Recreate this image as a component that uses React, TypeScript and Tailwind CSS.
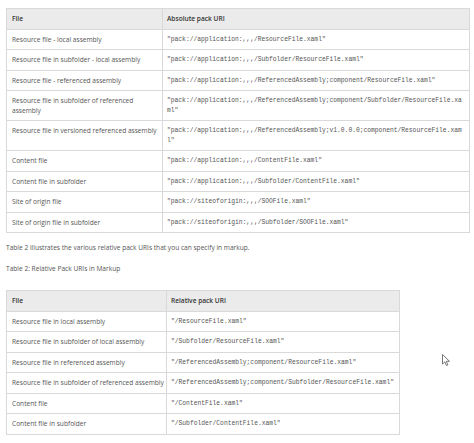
import React from "react";

type Row = { file: string[]; uri: string[] };

const t1: Row[] = [
  { file: ["Resource file - local assembly"], uri: ['"pack://application:,,,/ResourceFile.xaml"'] },
  { file: ["Resource file in subfolder - local assembly"], uri: ['"pack://application:,,,/Subfolder/ResourceFile.xaml"'] },
  { file: ["Resource file - referenced assembly"], uri: ['"pack://application:,,,/ReferencedAssembly;component/ResourceFile.xaml"'] },
  { file: ["Resource file in subfolder of referenced", "assembly"], uri: ['"pack://application:,,,/ReferencedAssembly;component/Subfolder/ResourceFile.xa', 'ml"'] },
  { file: ["Resource file in versioned referenced assembly"], uri: ['"pack://application:,,,/ReferencedAssembly;v1.0.0.0;component/ResourceFile.xam', 'l"'] },
  { file: ["Content file"], uri: ['"pack://application:,,,/ContentFile.xaml"'] },
  { file: ["Content file in subfolder"], uri: ['"pack://application:,,,/Subfolder/ContentFile.xaml"'] },
  { file: ["Site of origin file"], uri: ['"pack://siteoforigin:,,,/SOOFile.xaml"'] },
  { file: ["Site of origin file in subfolder"], uri: ['"pack://siteoforigin:,,,/Subfolder/SOOFile.xaml"'] },
];

const t2: Row[] = [
  { file: ["Resource file in local assembly"], uri: ['"/ResourceFile.xaml"'] },
  { file: ["Resource file in subfolder of local assembly"], uri: ['"/Subfolder/ResourceFile.xaml"'] },
  { file: ["Resource file in referenced assembly"], uri: ['"/ReferencedAssembly;component/ResourceFile.xaml"'] },
  { file: ["Resource file in subfolder of referenced assembly"], uri: ['"/ReferencedAssembly;component/Subfolder/ResourceFile.xaml"'] },
  { file: ["Content file"], uri: ['"/ContentFile.xaml"'] },
  { file: ["Content file in subfolder"], uri: ['"/Subfolder/ContentFile.xaml"'] },
];

const thBase =
  "border border-[#d9d9d9] text-left font-semibold text-[#333] text-[6.6px] leading-[9.5px] py-[5px] font-['Open_Sans','Noto_Sans',sans-serif]";
const tdFile =
  "border border-[#d9d9d9] align-top text-[#555] text-[6.6px] leading-[9.5px] px-[5px] py-[5px] font-['Open_Sans','Noto_Sans',sans-serif]";
const tdUri =
  "border border-[#d9d9d9] align-top text-[#555] text-[6.3px] leading-[9.5px] px-[4px] py-[5px] font-['Liberation_Mono',monospace]";

function Body({ rows }: { rows: Row[] }) {
  return (
    <tbody>
      {rows.map((r, i) => (
        <tr key={i} className="bg-white">
          <td className={tdFile}>
            {r.file.map((l, j) => (
              <div key={j} className="whitespace-nowrap">{l}</div>
            ))}
          </td>
          <td className={tdUri}>
            {r.uri.map((l, j) => (
              <div key={j} className="whitespace-nowrap">{l}</div>
            ))}
          </td>
        </tr>
      ))}
    </tbody>
  );
}

export default function App() {
  return (
    <div className="w-[474px] h-[443px] bg-white relative overflow-hidden">
      <div className="pl-[6px] pt-[8px] flex flex-col items-start">
        <table className="border-collapse table-fixed w-[463px]">
          <thead>
            <tr className="bg-[#ebebeb]">
              <th className={thBase + " w-[156px] px-[5px]"}>File</th>
              <th className={thBase + " w-[307px] px-[4px]"}>Absolute pack URI</th>
            </tr>
          </thead>
          <Body rows={t1} />
        </table>
        <p className="mt-[10px] text-[6.6px] leading-[10px] text-[#555] font-['Open_Sans','Noto_Sans',sans-serif]">
          Table 2 illustrates the various relative pack URIs that you can specify in markup.
        </p>
        <p className="mt-[11px] text-[6.6px] leading-[10px] text-[#555] font-['Open_Sans','Noto_Sans',sans-serif]">
          Table 2: Relative Pack URIs in Markup
        </p>
        <table className="mt-[16px] border-collapse table-fixed w-[393px]">
          <thead>
            <tr className="bg-[#ebebeb]">
              <th className={thBase + " w-[160px] px-[5px]"}>File</th>
              <th className={thBase + " w-[233px] px-[4px]"}>Relative pack URI</th>
            </tr>
          </thead>
          <Body rows={t2} />
        </table>
      </div>
      <svg className="absolute left-[442px] top-[354px]" width="9" height="13" viewBox="0 0 9 13">
        <path
          d="M0.5 0.5 L0.5 10 L2.8 7.8 L4.4 11.5 L5.8 10.9 L4.3 7.3 L7.5 7.3 Z"
          fill="#fff"
          stroke="#555"
          strokeWidth="0.8"
          strokeLinejoin="round"
        />
      </svg>
    </div>
  );
}
